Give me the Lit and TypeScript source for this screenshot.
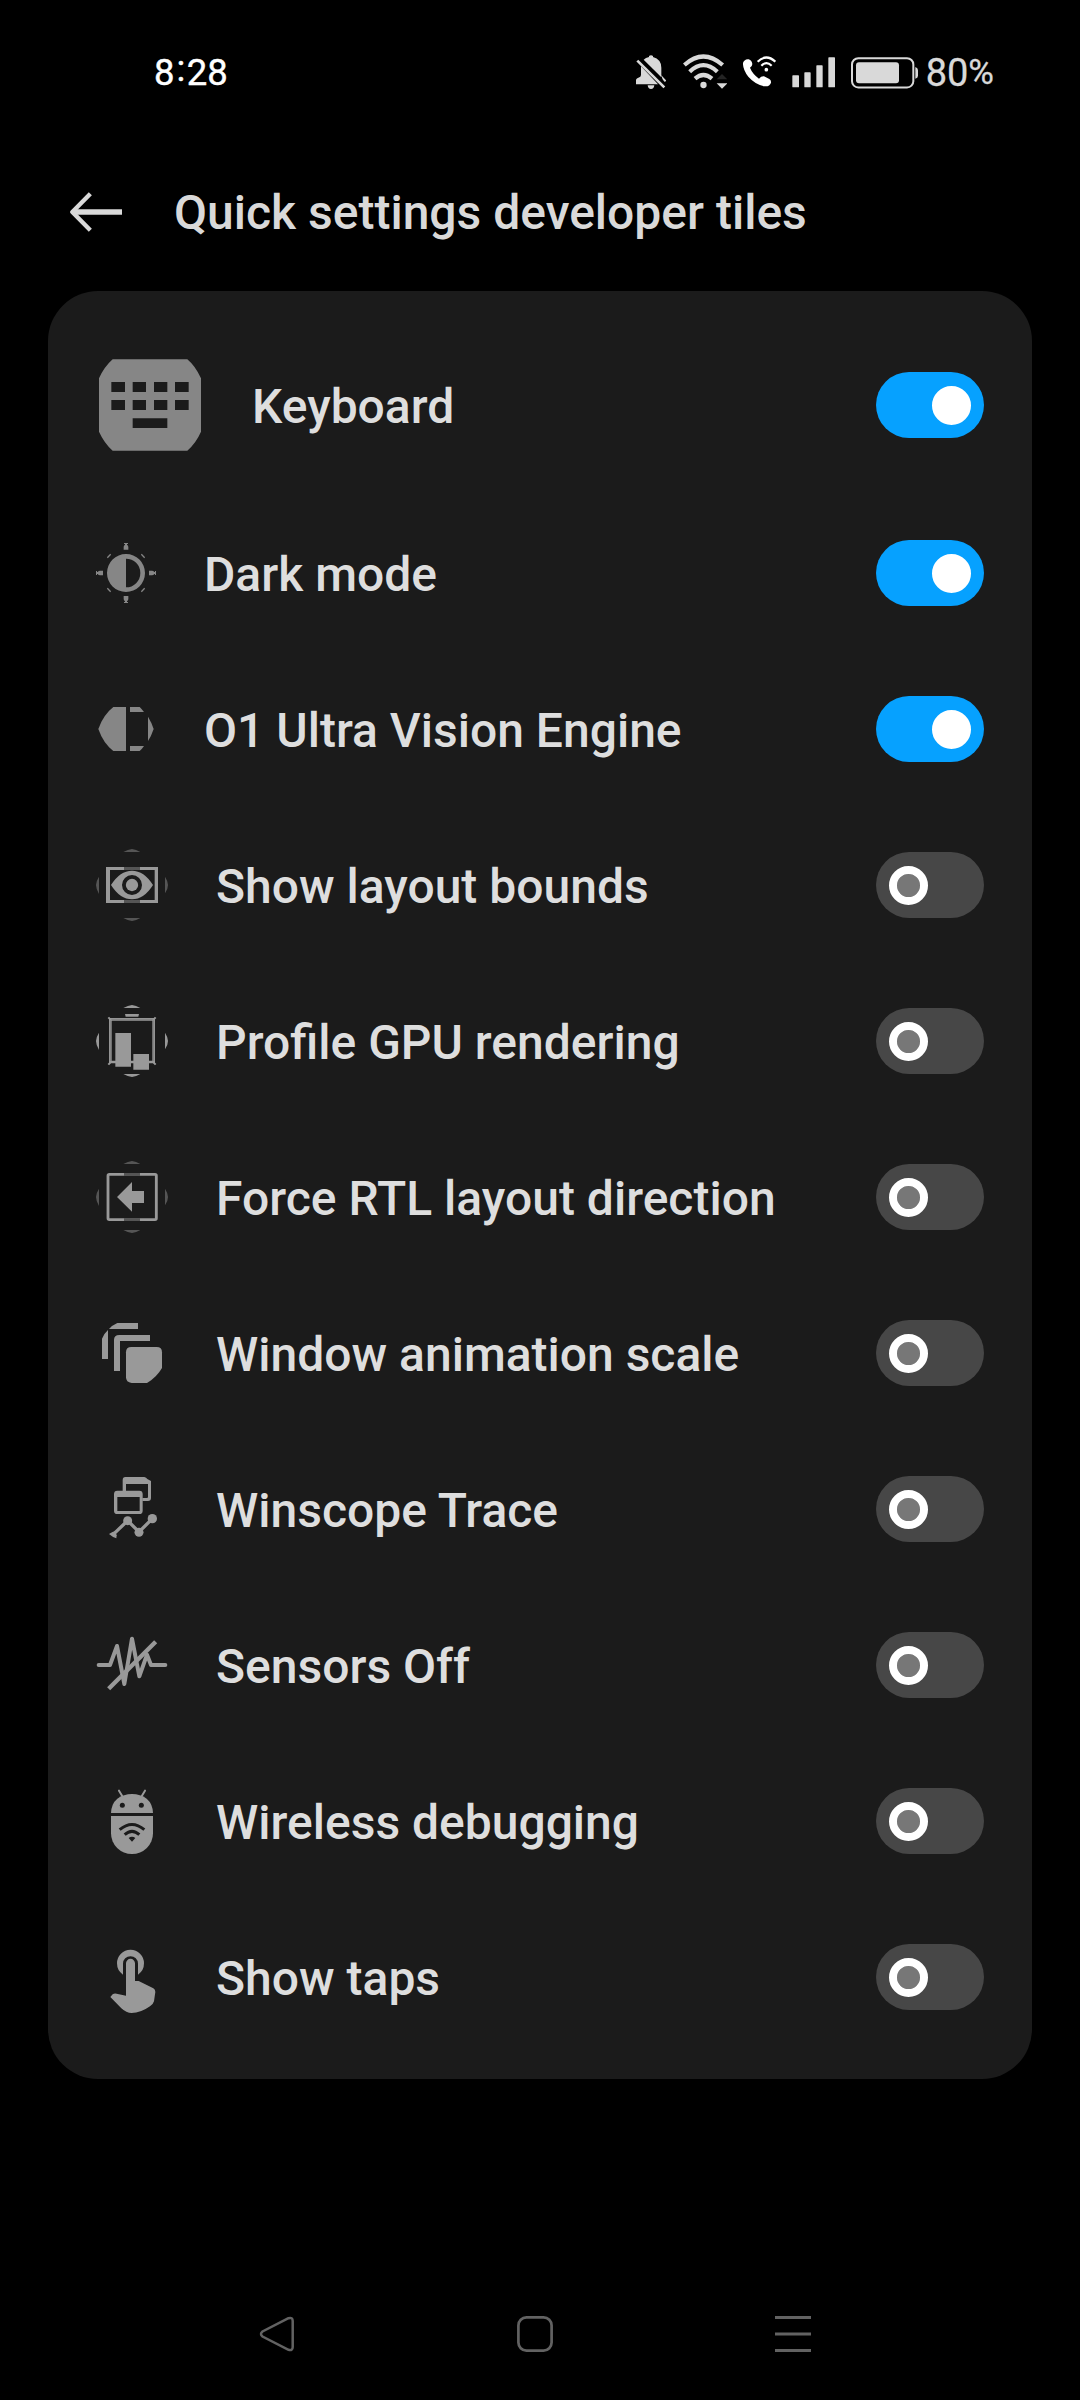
import { LitElement, html, svg, css } from "lit";
import { customElement, property } from "lit/decorators.js";

/* Tile artwork. Three view units equal one pixel; every box is centred on its row. */
const icons: Record<string, unknown> = {
  keyboard: svg`<svg width="108" height="108" viewBox="48 33 324 324" fill="#868686">
    <path fill-rule="evenodd" d="M98 58H322Q346 78 363 115V275Q348 309 322 332H98Q73 310 57 275V115Q73 80 98 58Z
      M94 126V156H135V126Z M158 126V156H198V126Z M222 126V156H262V126Z M285 126V156H326V126Z
      M94 180V210H135V180Z M158 180V210H198V180Z M222 180V210H262V180Z M285 180V210H326V180Z
      M158 235V264H262V235Z"/></svg>`,
  dark: svg`<svg width="60" height="60" viewBox="48 609 180 180" fill="#868686">
    <path fill-rule="evenodd" d="M138 642A57 57 0 1 1 138 756A57 57 0 1 1 138 642Z M138 656V742A43 43 0 0 0 138 656Z"/>
    <path d="M132 609H144V612H141V614Q145 617 145 621V629H131V621Q131 617 135 614V612H132Z
      M132 789H144V786H141V784Q145 781 145 777V768H131V777Q131 781 135 784V786H132Z
      M48 693H51V696H53Q56 692 60 692H69V706H60Q56 706 53 702H51V705H48Z
      M228 693H225V696H223Q220 692 216 692H207V706H216Q220 706 223 702H225V705H228Z"/>
    <path fill="none" stroke="#868686" stroke-width="4" d="M82 653L92 643M184 643L194 653M82 745L92 755M194 745L184 755"/></svg>`,
  vision: svg`<svg width="60" height="60" viewBox="48 117 180 180" fill="#868686">
    <path d="M100 141H138V273H100Q70 250 55 207Q70 164 100 141Z"/>
    <path d="M150 141H179Q186 148 192 156H150ZM150 273H179Q186 267 192 258H150Z"/>
    <path d="M204 170Q214 186 221 207Q214 228 204 243Z"/></svg>`,
  bounds: svg`<svg width="72" height="72" viewBox="48 567 216 216" fill="#999">
    <path fill="#555" d="M130 576Q144 568 156 567Q168 568 181 576ZM130 774Q144 782 156 783Q168 782 181 774ZM57 650Q48 664 48 675Q48 687 57 702ZM255 650Q264 664 264 675Q264 687 255 700Z"/>
    <path fill-rule="evenodd" d="M78 621H234V729H78ZM90 630V720H224V630Z"/>
    <path fill="#555" d="M132 621H180V630H132ZM132 720H180V729H132Z"/>
    <path fill-rule="evenodd" d="M93 675Q120 632 156 632Q192 632 219 675Q192 718 156 718Q120 718 93 675ZM156 645A30 30 0 1 0 156 705A30 30 0 1 0 156 645Z"/>
    <circle cx="156" cy="675" r="18.5"/></svg>`,
  gpu: svg`<svg width="72" height="72" viewBox="48 75 216 216" fill="#999">
    <path d="M130 84Q144 76 156 75Q168 76 181 84ZM130 282Q144 290 156 291Q168 290 181 282ZM57 158Q48 172 48 183Q48 195 57 210ZM255 158Q264 172 264 183Q264 195 255 208Z"/>
    <path d="M135 102H177L175 110H137Z"/>
    <path fill="none" stroke="#999" stroke-width="8" d="M91 118V246H221V118Z"/>
    <path fill="none" stroke="#777" stroke-width="2" d="M91 121V243M221 121V243M94 118H218"/>
    <path fill="none" stroke="#999" stroke-width="6" d="M85 112L91 118M227 112L221 118M85 254L91 248M227 254L221 248"/>
    <path d="M106 159H153V260H106ZM160 222H207V269H160Z"/></svg>`,
  rtl: svg`<svg width="72" height="72" viewBox="48 543 216 216" fill="#999">
    <path fill="#555" d="M130 552Q144 544 156 543Q168 544 181 552ZM130 750Q144 758 156 759Q168 758 181 750ZM57 626Q48 640 48 651Q48 663 57 678ZM255 626Q264 640 264 651Q264 663 255 676Z"/>
    <rect x="84" y="583" width="145" height="136" rx="4" fill="none" stroke="#999" stroke-width="8.5"/>
    <path fill="#555" d="M132 579H180V588H132ZM132 714H180V723H132Z"/>
    <path d="M111 651L156 606V633H192V669H156V695Z"/></svg>`,
  animation: svg`<svg width="72" height="72" viewBox="48 51 216 216" fill="#999">
    <path d="M112 69H174V87H87Q96 76 112 69ZM84 90V177H66V116Q70 103 84 90Z"/>
    <path d="M102 213V120Q102 105 118 105H210V123H120V213Z"/>
    <path d="M154 141H230Q246 141 246 157V204Q230 232 201 249H155Q138 247 138 232V157Q138 141 154 141Z"/></svg>`,
  winscope: svg`<svg width="72" height="72" viewBox="48 519 216 216" fill="#999">
    <path fill-rule="evenodd" d="M136 531H193Q199 532 202 537L213 543V594Q213 603 204 603H187V594H201Q204 594 204 590V552H138V573H128V541Q128 531 136 531Z"/>
    <path fill-rule="evenodd" d="M112 572H178Q188 572 188 582V632Q188 642 178 642H112Q102 642 102 632V582Q102 572 112 572ZM112 591V633H179V591Z"/>
    <path fill="none" stroke="#999" stroke-width="10" d="M99 704L143 662L177 696L217 656"/>
    <circle cx="143" cy="662" r="13.5"/><circle cx="177" cy="697" r="13.5"/><circle cx="217" cy="656" r="14"/>
    <path d="M87 702Q98 695 106 694L110 706L109 715Q97 711 87 702Z"/></svg>`,
  sensors: svg`<svg width="72" height="72" viewBox="48 87 216 216" fill="none" stroke="#999" stroke-linecap="round" stroke-linejoin="round">
    <path stroke-width="12" d="M56 195H90L111 138L133 252L156 116L178 229L201 164L213 195H256"/>
    <path stroke-width="13" stroke-linecap="butt" d="M86 266L227 125"/></svg>`,
  wireless: svg`<svg width="72" height="72" viewBox="48 555 216 216" fill="#999">
    <path d="M93 639Q94 611 112 596Q131 582 156 582Q181 582 200 596Q218 611 219 639Z"/>
    <path stroke="#999" stroke-width="6" stroke-linecap="round" d="M117 572L128 590M195 572L184 590"/>
    <circle cx="127" cy="616" r="7.5" fill="#1b1b1b"/><circle cx="184" cy="616" r="7.5" fill="#1b1b1b"/>
    <path d="M93 648H219V700A63 62 0 0 1 93 700Z"/>
    <path fill="none" stroke="#1b1b1b" stroke-width="9" d="M119 689Q156 658 193 689M134 704Q156 684 178 704"/>
    <path fill="#1b1b1b" d="M146 714Q156 706 166 714L156 725Z"/></svg>`,
  taps: svg`<svg width="72" height="72" viewBox="48 1023 216 216" fill="#999">
    <path d="M129 1124Q111 1112 111 1090A40.500 40.500 0 0 1 192 1090Q192 1112 174 1124V1091A22.500 22.500 0 0 0 129 1091Z"/>
    <path d="M138 1090A13.500 13.500 0 0 1 165 1090V1143H176L220 1165Q226 1168 226 1176L222 1204Q220 1212 210 1219Q182 1239 155 1239Q139 1239 124 1225L91 1191L98 1183Q103 1179 110 1181L138 1187Z"/></svg>`,
};

interface Tile {
  icon: string;
  label: string;
  on?: boolean;
}

const tiles: Tile[] = [
  { icon: "keyboard", label: "Keyboard", on: true },
  { icon: "dark", label: "Dark mode", on: true },
  { icon: "vision", label: "O1 Ultra Vision Engine", on: true },
  { icon: "bounds", label: "Show layout bounds" },
  { icon: "gpu", label: "Profile GPU rendering" },
  { icon: "rtl", label: "Force RTL layout direction" },
  { icon: "animation", label: "Window animation scale" },
  { icon: "winscope", label: "Winscope Trace" },
  { icon: "sensors", label: "Sensors Off" },
  { icon: "wireless", label: "Wireless debugging" },
  { icon: "taps", label: "Show taps" },
];

@customElement("status-bar")
class StatusBar extends LitElement {
  static styles = css`
    :host { display: flex; align-items: center; height: 144px; padding: 0 86px 0 154px; font: 400 36px/40px Roboto, sans-serif; color: #d9d9d9; }
    svg { display: block; flex: none; }
    .time { color: #fff; margin-right: auto; padding-top: 2px; font-size: 36.5px; -webkit-text-stroke: 0.4px #fff; }
    .colon { position: relative; top: -4px; margin: 0 1.5px 0 2px; }
    .icons { display: flex; align-items: center; }
    .bell { margin-right: 17px; }
    .wifi { margin-right: 16px; }
    .call { margin-right: 16px; }
    .signal { margin-right: 16px; }
    .battery { margin-right: 8px; }
    .level { font-size: 38px; padding-top: 4px; -webkit-text-stroke: 0.3px #d9d9d9; }
    .percent { position: relative; top: -2px; font-size: 35px; }
  `;
  render() {
    return html`
      <div class="time">8<span class="colon">:</span>28</div>
      <div class="icons">
        <svg class="bell" width="30" height="40" viewBox="105 65 90 120" fill="#d9d9d9">
          <path d="M128 88Q134 82 144 80V77Q150 72 156 77V80Q181 87 181 112V141ZM120 108L171 162H105V148Q107 143 112 142Q120 141 120 134ZM181 135L195 150V153L190 154Q183 147 181 135ZM140 165H160Q159 176 150 176Q141 176 140 165Z"/>
          <path d="M109 91L190 171" stroke="#d9d9d9" stroke-width="8"/>
        </svg>
        <svg class="wifi" width="44" height="40" viewBox="246 65 132 120">
          <g fill="none" stroke="#d9d9d9" stroke-width="12.500">
            <path d="M250 104Q307 53 365 104M266 124Q307 85 349 124M282 145Q307 123 333 145"/>
          </g>
          <circle cx="307.500" cy="164" r="9.500" fill="#d9d9d9"/>
          <path d="M347 147L363 131L379 147Z" fill="#242424"/>
          <path d="M347 159H379L363 175Z" fill="#d9d9d9"/>
        </svg>
        <svg class="call" width="33" height="40" viewBox="426 65 99 120">
          <path fill="#fff" d="M430 91Q436 86 443 87Q453 91 454 101Q454 107 447 112Q454 130 474 145Q481 137 489 138L505 146Q511 150 510 157Q506 169 492 168Q463 163 442 139Q425 117 426 98Q427 93 430 91Z"/>
          <g fill="none" stroke="#fff" stroke-width="6.500"><path d="M470 94Q496 69 523 94M481 106Q496 91 512 106"/></g>
          <circle cx="496" cy="118" r="5.500" fill="#fff"/>
        </svg>
        <svg class="signal" width="43" height="40" viewBox="573 65 129 120" fill="#d9d9d9">
          <rect x="574" y="135" width="20" height="36" rx="2"/><rect x="610" y="126" width="19" height="45" rx="2"/>
          <rect x="646" y="105" width="19" height="66" rx="2"/><rect x="682" y="81" width="20" height="90" rx="2"/>
        </svg>
        <svg class="battery" width="67" height="40" viewBox="750 65 201 120" fill="#d9d9d9">
          <rect x="753" y="83.500" width="184" height="88" rx="19" fill="none" stroke="#d9d9d9" stroke-width="6"/>
          <rect x="765" y="96" width="129" height="63" rx="9"/>
          <path d="M943 110Q951 112 951 120V136Q951 143 943 145Z"/>
        </svg>
        <span class="level">80<span class="percent">%</span></span>
      </div>`;
  }
}

@customElement("tile-switch")
class TileSwitch extends LitElement {
  @property({ type: Boolean, reflect: true }) on = false;
  static styles = css`
    :host { display: flex; align-items: center; box-sizing: border-box; width: 108px; height: 66px; border-radius: 33px; padding: 0 13px; background: #474747; }
    :host([on]) { background: #06a1ff; justify-content: flex-end; }
    .thumb { box-sizing: border-box; width: 39px; height: 39px; border-radius: 50%; border: 8px solid #fff; background: #777; background-clip: padding-box; }
    :host([on]) .thumb { background: #fff; background-clip: border-box; }
  `;
  render() {
    return html`<div class="thumb"></div>`;
  }
}

@customElement("app-root")
class AppRoot extends LitElement {
  static styles = css`
    :host { display: flex; flex-direction: column; box-sizing: border-box; width: 1080px; height: 2400px; overflow: hidden; background: #000; color: #dedede; font-family: Roboto, sans-serif; }
    svg { display: block; flex: none; }
    .header { display: flex; align-items: center; gap: 52px; height: 136px; margin-bottom: 11px; padding-left: 70px; }
    .title { margin: 0; padding-top: 1px; font: 500 48px/56px Roboto, sans-serif; color: #d9d9d9; white-space: nowrap; }
    .card { margin: 0 48px; padding: 24px 48px; border-radius: 50px; background: #1b1b1b; }
    .row { display: flex; align-items: center; height: 156px; }
    .row:first-child { height: 180px; }
    .label { flex: 1; padding: 3px 0 0 48px; font-size: 48px; line-height: 56px; font-weight: 500; white-space: nowrap; }
    .nav { display: flex; justify-content: space-between; align-items: center; margin-top: auto; height: 132px; padding: 0 269px 0 259px; }
  `;
  render() {
    return html`
      <status-bar></status-bar>
      <div class="header">
        <svg width="52" height="40" viewBox="90 456 156 120" fill="none" stroke="#d9d9d9">
          <path stroke-width="17" d="M99 516H246"/>
          <path stroke-width="13" stroke-linejoin="round" d="M151 461L97 516L151 571"/>
        </svg>
        <h1 class="title">Quick settings developer tiles</h1>
      </div>
      <div class="card">
        ${tiles.map(
          (t) => html`<div class="row">
            ${icons[t.icon]}
            <span class="label">${t.label}</span>
            <tile-switch ?on=${t.on}></tile-switch>
          </div>`
        )}
      </div>
      <div class="nav">
        <svg width="36" height="36" viewBox="0 0 36 36" fill="none" stroke="#626262" stroke-width="2.500">
          <path d="M29.500 2.200L3.500 15.500Q0.500 18 3.500 20.500L29.500 33.800Q33.700 35 33.700 31V5Q33.700 1 29.500 2.200Z"/>
        </svg>
        <svg width="36" height="36" viewBox="0 0 36 36" fill="none" stroke="#626262" stroke-width="2.700">
          <rect x="1.400" y="1.400" width="33.200" height="33.200" rx="8"/>
        </svg>
        <svg width="36" height="36" viewBox="0 0 36 36" fill="#626262">
          <path d="M0 0H36V3H0ZM0 16.500H36V19.500H0ZM0 33H36V36H0Z"/>
        </svg>
      </div>`;
  }
}
